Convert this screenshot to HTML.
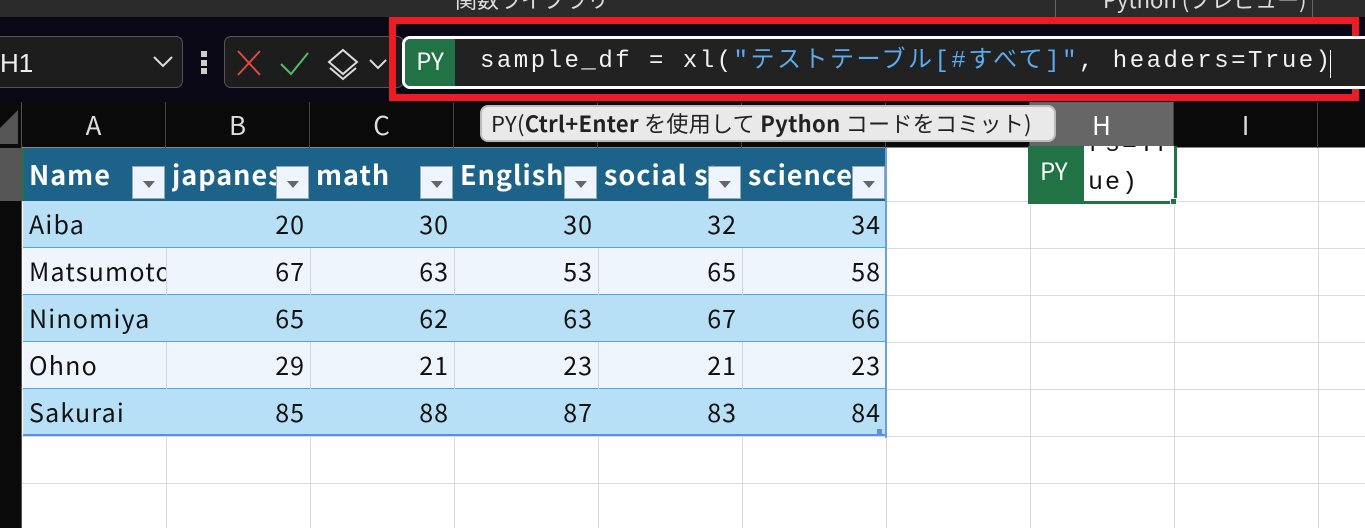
<!DOCTYPE html>
<html><head><meta charset="utf-8"><style>
*{margin:0;padding:0;box-sizing:border-box}
body{width:1365px;height:528px;overflow:hidden;background:#fff;position:relative;font-family:"Liberation Sans","Noto Sans CJK JP",sans-serif}
.a{position:absolute}
.mono{font-family:"Liberation Mono","Noto Sans CJK JP",monospace}
.cell{position:absolute;font-family:"Noto Sans CJK JP",sans-serif;font-size:25px;letter-spacing:1.2px;color:#111;line-height:47px;white-space:nowrap;overflow:hidden}
.hd{position:absolute;font-family:"Noto Sans CJK JP",sans-serif;font-weight:bold;font-size:27px;letter-spacing:1px;color:#fff;line-height:52px;white-space:nowrap;overflow:hidden;top:148px}
.fb{position:absolute;top:166px;width:33px;height:33px;background:#eef5ff;border:1px solid #9aa}
.fb:after{content:"";position:absolute;left:10px;top:14px;border-left:6px solid transparent;border-right:6px solid transparent;border-top:7px solid #666}
.ch{position:absolute;top:102px;height:46px;color:#ddd;font-size:26px;line-height:46px;text-align:center;font-family:"Noto Sans CJK JP",sans-serif;border-right:1px solid #444}
</style></head><body>
<div class="a" style="left:0;top:0;width:1365px;height:17px;background:#2b2b2b;overflow:hidden">
<div class="a" style="left:455px;top:-17px;color:#ddd;font-size:22px;font-family:'Noto Sans CJK JP',sans-serif">関数ライブラリ</div>
<div class="a" style="left:1055px;top:0;width:1px;height:17px;background:#666"></div>
<div class="a" style="left:1103px;top:-17px;color:#ddd;font-size:22px;font-family:'Noto Sans CJK JP',sans-serif">Python (プレビュー)</div>
<div class="a" style="left:1312px;top:0;width:1px;height:17px;background:#666"></div>
</div>
<div class="a" style="left:0;top:17px;width:1365px;height:85px;background:#0b0815"></div>
<div class="a" style="left:-10px;top:36px;width:193px;height:52px;border:1px solid #555;border-radius:7px;background:#1d1d1d"></div>
<div class="a" style="left:0;top:43px;color:#eee;font-size:26px;font-family:'Liberation Sans',sans-serif;line-height:40px">H1</div>
<svg class="a" style="left:152px;top:55px" width="22" height="14"><path d="M2 2 L11 11 L20 2" stroke="#ddd" stroke-width="2" fill="none"/></svg>
<div class="a" style="left:201px;top:51px;width:6px;height:6px;background:#ccc"></div>
<div class="a" style="left:201px;top:60px;width:6px;height:6px;background:#ccc"></div>
<div class="a" style="left:201px;top:68px;width:6px;height:6px;background:#ccc"></div>
<div class="a" style="left:224px;top:36px;width:180px;height:52px;border:1px solid #555;border-radius:7px;background:#1d1d1d"></div>
<svg class="a" style="left:235px;top:48px" width="160" height="34">
<path d="M3 3 L25 27 M25 3 L3 27" stroke="#e04848" stroke-width="2" fill="none"/>
<path d="M46 16 L56 26 L73 5" stroke="#4fc060" stroke-width="2" fill="none"/>
<path d="M108 2 L122 14 L108 26 L94 14 Z" stroke="#ddd" stroke-width="2" fill="none"/>
<path d="M95 20 L108 31 L121 20" stroke="#ddd" stroke-width="2" fill="none"/>
<path d="M135 12 L143 20 L151 12" stroke="#ddd" stroke-width="2" fill="none"/>
</svg>
<div class="a" style="left:389px;top:17px;width:970px;height:84px;border:7px solid #ec1c24"></div>
<div class="a" style="left:402px;top:36px;width:980px;height:53px;border:3px solid #fff;border-radius:8px;background:#222"></div>
<div class="a" style="left:405px;top:39px;width:50px;height:47px;background:#217346;border-radius:5px 0 0 5px;color:#fff;font-size:24px;line-height:42px;text-align:center;font-family:'Noto Sans CJK JP',sans-serif">PY</div>
<div class="a mono" style="left:480px;top:44px;font-size:24px;letter-spacing:2.5px;line-height:36px;color:#f2f2f2;white-space:nowrap">sample_df = xl(<span style="color:#5aabef">"テストテーブル[#すべて]"</span>, headers=True)</div>
<div class="a" style="left:1330px;top:50px;width:1px;height:28px;background:#fff"></div>
<div class="a" style="left:0;top:102px;width:1365px;height:46px;background:#0a0a0a;border-bottom:1px solid #888"></div>
<div class="a" style="left:0;top:102px;width:22px;height:46px;background:#0a0a0a;border-right:1px solid #555"></div>
<svg class="a" style="left:0;top:108px" width="20" height="38"><path d="M18 2 L18 36 L0 36 L0 20 Z" fill="#555"/></svg>
<div class="ch" style="left:22px;width:144px">A</div>
<div class="ch" style="left:166px;width:144px">B</div>
<div class="ch" style="left:310px;width:144px">C</div>
<div class="ch" style="left:454px;width:144px">D</div>
<div class="ch" style="left:598px;width:144px">E</div>
<div class="ch" style="left:742px;width:144px">F</div>
<div class="ch" style="left:886px;width:144px">G</div>
<div class="ch" style="left:1030px;width:144px;background:#666;color:#fff">H</div>
<div class="ch" style="left:1174px;width:144px">I</div>
<div class="ch" style="left:1318px;width:60px"></div>
<div class="a" style="left:480px;top:105px;width:576px;height:37px;background:#e9e9e9;border:2px solid #bbb;border-radius:8px;font-size:22px;letter-spacing:0.3px;line-height:32px;color:#222;padding-left:9px;font-family:'Noto Sans CJK JP',sans-serif;white-space:nowrap;overflow:hidden">PY(<b>Ctrl+Enter</b> を使用して <b>Python</b> コードをコミット)</div>
<div class="a" style="left:0;top:148px;width:22px;height:380px;background:#0a0a0a;border-right:1px solid #555"></div>
<div class="a" style="left:0;top:148px;width:22px;height:53px;background:#555"></div>
<svg class="a" style="left:22px;top:148px" width="1343" height="380">
<g stroke="#dadada" stroke-width="1">
<line x1="144.5" y1="0" x2="144.5" y2="380"/><line x1="288.5" y1="0" x2="288.5" y2="380"/><line x1="432.5" y1="0" x2="432.5" y2="380"/><line x1="576.5" y1="0" x2="576.5" y2="380"/><line x1="720.5" y1="0" x2="720.5" y2="380"/><line x1="864.5" y1="0" x2="864.5" y2="380"/><line x1="1008.5" y1="0" x2="1008.5" y2="380"/><line x1="1152.5" y1="0" x2="1152.5" y2="380"/><line x1="1296.5" y1="0" x2="1296.5" y2="380"/>
<line x1="0" y1="53.5" x2="1343" y2="53.5"/><line x1="0" y1="100.5" x2="1343" y2="100.5"/><line x1="0" y1="147.5" x2="1343" y2="147.5"/><line x1="0" y1="194.5" x2="1343" y2="194.5"/><line x1="0" y1="241.5" x2="1343" y2="241.5"/><line x1="0" y1="288.5" x2="1343" y2="288.5"/><line x1="0" y1="335.5" x2="1343" y2="335.5"/>
</g></svg>
<div class="a" style="left:23px;top:148px;width:863px;height:53px;background:#1d6389"></div>
<div class="a" style="left:22px;top:148px;width:2px;height:53px;background:#217346"></div>
<div class="a" style="left:23px;top:201px;width:863px;height:47px;background:#b7dff6;border-bottom:1px solid #4aa8e0"></div>
<div class="a" style="left:23px;top:248px;width:863px;height:47px;background:#eef5fd;border-bottom:1px solid #4aa8e0"></div>
<div class="a" style="left:23px;top:295px;width:863px;height:47px;background:#b7dff6;border-bottom:1px solid #4aa8e0"></div>
<div class="a" style="left:23px;top:342px;width:863px;height:47px;background:#eef5fd;border-bottom:1px solid #4aa8e0"></div>
<div class="a" style="left:23px;top:389px;width:863px;height:47px;background:#b7dff6;border-bottom:2px solid #5b8fe0"></div>
<div class="a" style="left:885px;top:148px;width:2px;height:290px;background:#6a9fe5"></div>
<svg class="a" style="left:22px;top:248px" width="864" height="141"><g stroke="#cfd8e2"><line x1="144.5" y1="0" x2="144.5" y2="47"/><line x1="288.5" y1="0" x2="288.5" y2="47"/><line x1="432.5" y1="0" x2="432.5" y2="47"/><line x1="576.5" y1="0" x2="576.5" y2="47"/><line x1="720.5" y1="0" x2="720.5" y2="47"/><line x1="144.5" y1="94" x2="144.5" y2="141"/><line x1="288.5" y1="94" x2="288.5" y2="141"/><line x1="432.5" y1="94" x2="432.5" y2="141"/><line x1="576.5" y1="94" x2="576.5" y2="141"/><line x1="720.5" y1="94" x2="720.5" y2="141"/></g></svg>
<div class="hd" style="left:29px;width:100px">Name</div>
<div class="hd" style="left:172px;width:110px">japanese</div>
<div class="hd" style="left:316px;width:100px">math</div>
<div class="hd" style="left:460px;width:104px">English</div>
<div class="hd" style="left:604px;width:110px">social st</div>
<div class="hd" style="left:748px;width:106px">science</div>
<div class="fb" style="left:132px"></div>
<div class="fb" style="left:276px"></div>
<div class="fb" style="left:420px"></div>
<div class="fb" style="left:564px"></div>
<div class="fb" style="left:708px"></div>
<div class="fb" style="left:852px"></div>
<div class="cell" style="left:29px;top:201px">Aiba</div>
<div class="cell" style="left:29px;top:248px;width:137px">Matsumoto</div>
<div class="cell" style="left:29px;top:295px">Ninomiya</div>
<div class="cell" style="left:29px;top:342px">Ohno</div>
<div class="cell" style="left:29px;top:389px">Sakurai</div>
<div class="a" style="left:166px;top:201px;width:720px;font-family:'Noto Sans CJK JP',sans-serif;font-size:25px;letter-spacing:1px;color:#111">
<div style="display:flex;height:47px;line-height:47px"><span style="width:144px;text-align:right;padding-right:5px">20</span><span style="width:144px;text-align:right;padding-right:5px">30</span><span style="width:144px;text-align:right;padding-right:5px">30</span><span style="width:144px;text-align:right;padding-right:5px">32</span><span style="width:144px;text-align:right;padding-right:5px">34</span></div>
<div style="display:flex;height:47px;line-height:47px"><span style="width:144px;text-align:right;padding-right:5px">67</span><span style="width:144px;text-align:right;padding-right:5px">63</span><span style="width:144px;text-align:right;padding-right:5px">53</span><span style="width:144px;text-align:right;padding-right:5px">65</span><span style="width:144px;text-align:right;padding-right:5px">58</span></div>
<div style="display:flex;height:47px;line-height:47px"><span style="width:144px;text-align:right;padding-right:5px">65</span><span style="width:144px;text-align:right;padding-right:5px">62</span><span style="width:144px;text-align:right;padding-right:5px">63</span><span style="width:144px;text-align:right;padding-right:5px">67</span><span style="width:144px;text-align:right;padding-right:5px">66</span></div>
<div style="display:flex;height:47px;line-height:47px"><span style="width:144px;text-align:right;padding-right:5px">29</span><span style="width:144px;text-align:right;padding-right:5px">21</span><span style="width:144px;text-align:right;padding-right:5px">23</span><span style="width:144px;text-align:right;padding-right:5px">21</span><span style="width:144px;text-align:right;padding-right:5px">23</span></div>
<div style="display:flex;height:47px;line-height:47px"><span style="width:144px;text-align:right;padding-right:5px">85</span><span style="width:144px;text-align:right;padding-right:5px">88</span><span style="width:144px;text-align:right;padding-right:5px">87</span><span style="width:144px;text-align:right;padding-right:5px">83</span><span style="width:144px;text-align:right;padding-right:5px">84</span></div>
</div>
<div class="a" style="left:877px;top:429px;width:5px;height:5px;background:#5b8fe0"></div>
<div class="a" style="left:1028px;top:146px;width:149px;height:58px;background:#217346"></div>
<div class="a" style="left:1084px;top:146px;width:90px;height:55px;background:#fff;overflow:hidden">
<div class="mono" style="position:absolute;left:4px;top:-20px;font-size:25px;letter-spacing:2px;line-height:38px;color:#111;white-space:nowrap">rs=Tr<br>ue)</div></div>
<div class="a" style="left:1040px;top:150px;color:#fff;font-size:24px;line-height:40px;font-family:'Noto Sans CJK JP',sans-serif">PY</div>
<div class="a" style="left:1170px;top:198px;width:7px;height:7px;background:#217346;border:1px solid #fff"></div>
</body></html>
